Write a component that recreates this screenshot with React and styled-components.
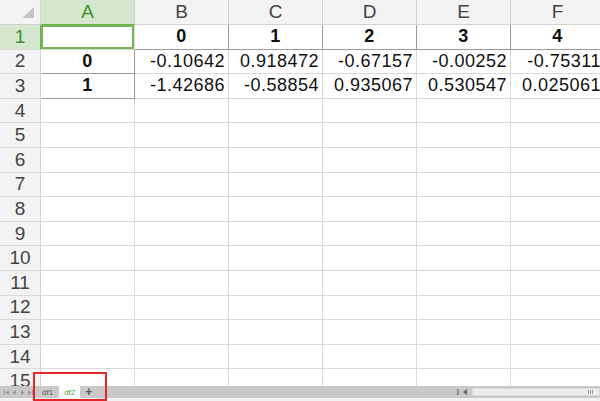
import React from 'react';
import styled, { createGlobalStyle, css } from 'styled-components';

const GlobalStyle = createGlobalStyle`
  html, body { margin: 0; padding: 0; background: #fff; }
  body { font-family: "Liberation Sans", Arial, sans-serif; }
`;

/** Page */
const Page = styled.div`
  position: relative;
  width: 600px;
  height: 401px;
  overflow: hidden;
  display: flex;
  flex-direction: column;
  background: #f1f1f1;
`;

/** Sheet grid */
const Sheet = styled.div`
  height: 386px;
  overflow: hidden;
  background: #fff;
  display: grid;
  grid-template-columns: 41px repeat(6, 94px);
  grid-template-rows: 25px repeat(15, 24.6px);
`;

const Corner = styled.div`
  background: #f3f3f3;
  border-right: 1px solid #d2d2d2;
  border-bottom: 1px solid #d2d2d2;
  display: flex;
  align-items: flex-end;
  justify-content: flex-end;
  padding: 0 6px 6px 0;
`;

const ColHead = styled.div`
  background: ${p => (p.$active ? '#d5e7cf' : '#f3f3f3')};
  color: ${p => (p.$active ? '#3b9128' : '#444')};
  border-right: 1px solid #d2d2d2;
  border-bottom: ${p => (p.$active ? '1px solid #6db04f' : '1px solid #d2d2d2')};
  font-size: 19px;
  display: flex;
  align-items: center;
  justify-content: center;
  padding-bottom: 1px;
`;

const RowHead = styled.div`
  background: ${p => (p.$active ? '#d5e7cf' : '#f3f3f3')};
  color: ${p => (p.$active ? '#3b9128' : '#444')};
  border-right: 1px solid ${p => (p.$active ? '#6db04f' : '#d2d2d2')};
  border-bottom: 1px solid #d8d8d8;
  font-size: 19px;
  display: flex;
  align-items: center;
  justify-content: center;
`;

const Cell = styled.div`
  border-right: 1px solid ${p => (p.$framed ? '#9a9a9a' : '#dadada')};
  border-bottom: 1px solid ${p => (p.$framed ? '#9a9a9a' : '#dadada')};
  font-size: 18px;
  letter-spacing: 0.5px;
  color: #111;
  display: flex;
  align-items: center;
  justify-content: ${p => (p.$bold ? 'center' : 'flex-end')};
  padding: 0 ${p => (p.$bold ? '0' : '3px')};
  white-space: nowrap;
  overflow: hidden;
  font-weight: ${p => (p.$bold ? 700 : 400)};
  ${p => p.$selected && css`
    box-shadow: inset 0 0 0 2px #76b35a;
  `}
`;

/** Tab bar */
const TabBar = styled.div`
  height: 12px;
  background: #c9c9c9;
  display: flex;
  align-items: stretch;
`;

const Nav = styled.div`
  width: 36px;
  display: flex;
  align-items: center;
  gap: 3px;
  padding-left: 4px;
  box-sizing: border-box;
`;

const Tab = styled.div`
  font-size: 8px;
  display: flex;
  align-items: center;
  padding: 0 ${p => (p.$active ? '5px' : '3px')};
  margin-left: ${p => (p.$active ? '3px' : '3px')};
  background: ${p => (p.$active ? '#fff' : 'transparent')};
  color: ${p => (p.$active ? '#4ea33b' : '#555')};
`;

const AddTab = styled.div`
  font-size: 12px;
  font-weight: 700;
  color: #555;
  display: flex;
  align-items: center;
  margin-left: 5px;
  line-height: 1;
`;

const Spacer = styled.div`
  flex: 1;
`;

const Splitter = styled.div`
  width: 2px;
  margin: 3px 0;
  background: #8c8c8c;
`;

const ScrollArrow = styled.div`
  width: 12px;
  display: flex;
  align-items: center;
  justify-content: center;
`;

const Track = styled.div`
  width: 120px;
  margin: 2px 0 2px 1px;
  background: #ededed;
  border: 1px solid #d8d8d8;
  display: flex;
  align-items: center;
  justify-content: flex-end;
  padding-right: 6px;
  gap: 1px;
`;

const Grip = styled.span`
  width: 1px;
  height: 4px;
  background: #9a9a9a;
`;

const BottomStrip = styled.div`
  flex: 1;
  background: #f2f2f2;
`;

/** Annotation */
const Highlight = styled.div`
  position: absolute;
  left: 33px;
  top: 372px;
  width: 70px;
  height: 25px;
  border: 2px solid #e5252a;
`;

const cols = ['A', 'B', 'C', 'D', 'E', 'F'];
const data = [
  [{ v: '', sel: true }, ...['0', '1', '2', '3', '4'].map(v => ({ v, bold: true, framed: true }))],
  [{ v: '0', bold: true, framed: true }, ...['-0.10642', '0.918472', '-0.67157', '-0.00252', '-0.75311'].map(v => ({ v }))],
  [{ v: '1', bold: true, framed: true }, ...['-1.42686', '-0.58854', '0.935067', '0.530547', '0.025061'].map(v => ({ v }))],
];

const NavIcon = ({ d }) => (
  <svg width="5" height="5" viewBox="0 0 5 5"><path d={d} fill="#9a9a9a" /></svg>
);

export default function App() {
  const rows = [];
  for (let r = 1; r <= 15; r++) {
    const line = data[r - 1];
    rows.push(<RowHead key={`h${r}`} $active={r === 1}>{r}</RowHead>);
    cols.forEach((c, i) => {
      const cell = line ? line[i] : { v: '' };
      rows.push(
        <Cell key={`${c}${r}`} $bold={cell.bold} $framed={cell.framed} $selected={cell.sel}>
          {cell.v}
        </Cell>
      );
    });
  }

  return (
    <Page>
      <GlobalStyle />
      <Sheet>
        <Corner>
          <svg width="12" height="11" viewBox="0 0 12 11"><path d="M12 0 L12 11 L0 11 Z" fill="#c4c4c4" /></svg>
        </Corner>
        {cols.map(c => <ColHead key={c} $active={c === 'A'}>{c}</ColHead>)}
        {rows}
      </Sheet>
      <TabBar>
        <Nav>
          <NavIcon d="M0 0h1v5H0z M5 0v5L1.5 2.5z" />
          <NavIcon d="M4 0v5L0.5 2.5z" />
          <NavIcon d="M1 0v5l3.5-2.5z" />
          <NavIcon d="M0 0v5l3.5-2.5z M4 0h1v5H4z" />
        </Nav>
        <Tab>df1</Tab>
        <Tab $active>df2</Tab>
        <AddTab>+</AddTab>
        <Spacer />
        <Splitter />
        <ScrollArrow>
          <svg width="5" height="6" viewBox="0 0 5 6"><path d="M4 0v6L0 3z" fill="#666" /></svg>
        </ScrollArrow>
        <Track>
          <Grip /><Grip /><Grip />
        </Track>
      </TabBar>
      <BottomStrip />
      <Highlight />
    </Page>
  );
}
